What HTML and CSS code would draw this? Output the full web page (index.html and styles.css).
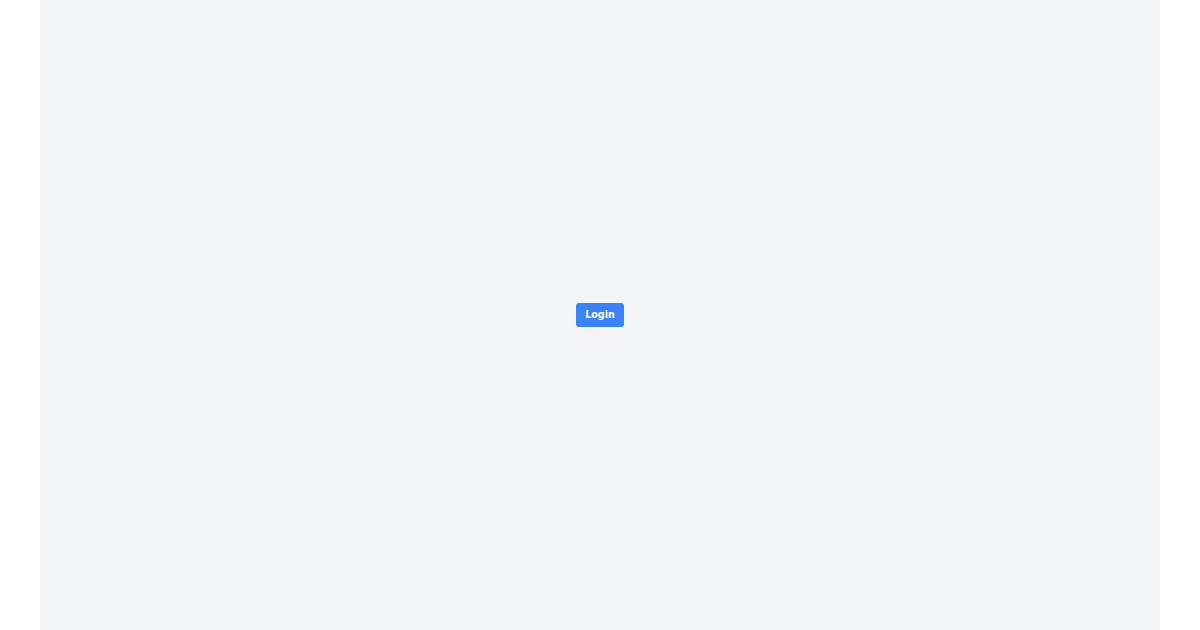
FILE: index.html
```html
<!DOCTYPE html>
<html>
<head>
<meta charset="utf-8">
<link rel="stylesheet" href="styles.css">
</head>
<body>
<div class="page">
  <button class="login-btn">Login</button>
</div>
</body>
</html>
```
FILE: styles.css
```css
html, body { margin: 0; padding: 0; background: #ffffff; }
body { font-family: "DejaVu Sans", sans-serif; }
.page {
  width: 1120px;
  margin: 0 auto;
  height: 630px;
  background: #f3f4f6;
  display: flex;
  align-items: center;
  justify-content: center;
}
.login-btn {
  background: #3b82f6;
  color: #ffffff;
  border: none;
  border-radius: 3px;
  font-family: "DejaVu Sans", sans-serif;
  font-weight: 700;
  font-size: 9.6px;
  line-height: 24px;
  padding: 0;
  text-align: center;
  width: 48px;
  height: 24px;
}
```
